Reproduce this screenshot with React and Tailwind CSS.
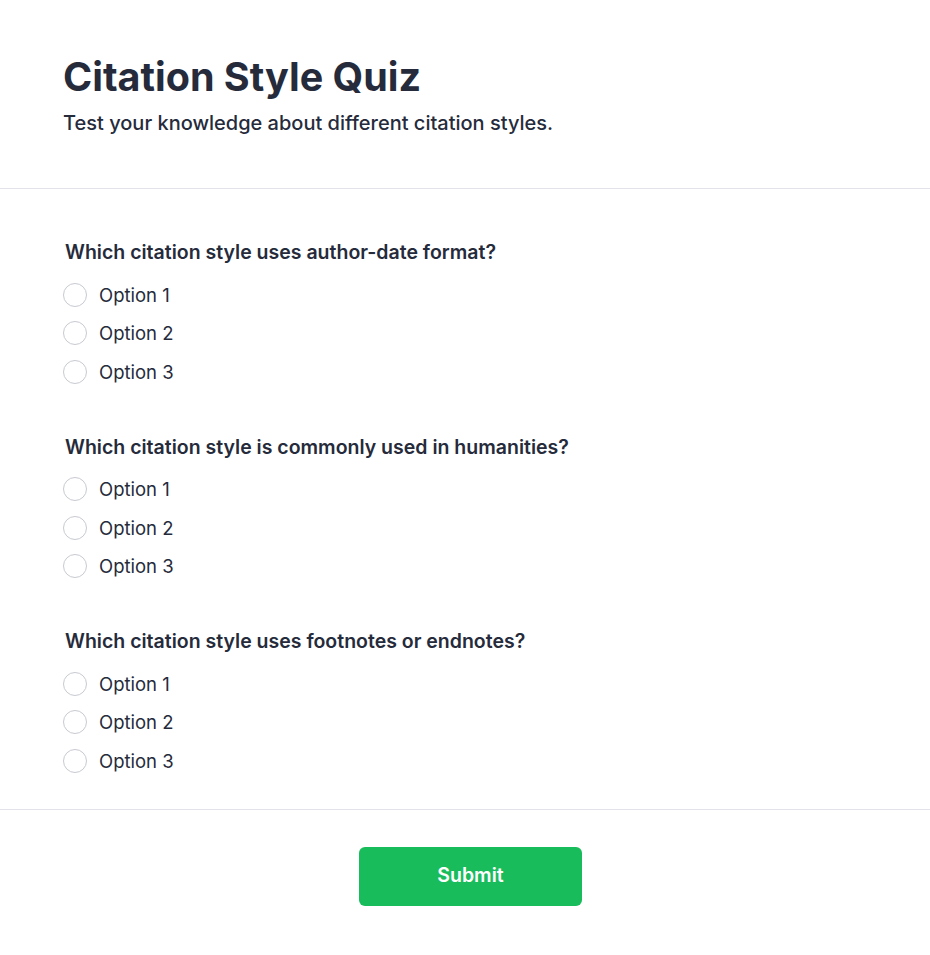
import React, { useState } from 'react';

const questions = [
  'Which citation style uses author-date format?',
  'Which citation style is commonly used in humanities?',
  'Which citation style uses footnotes or endnotes?',
];

export default function App() {
  const [answers, setAnswers] = useState({});

  return (
    <div className="min-h-screen bg-white text-[#262b3b]" style={{ fontFamily: 'Inter, "Liberation Sans", sans-serif' }}>
      <div className="px-[63px] pt-[51px] pb-[51px]">
        <h1 className="text-[39.5px] font-bold leading-[52px]">Citation Style Quiz</h1>
        <p className="text-[20px] font-medium mt-[6px] leading-7">Test your knowledge about different citation styles.</p>
      </div>

      <div className="border-t border-[#e2e3ea] px-[63px] pt-[49px] pb-[36px]">
        {questions.map((q, qi) => (
          <div key={qi} className="mb-[49px] last:mb-0">
            <h3 className="text-[19.5px] font-semibold ml-[2px] leading-7">{q}</h3>
            <div className="mt-[16.5px] flex flex-col gap-[14.5px]">
              {[1, 2, 3].map(n => (
                <label key={n} className="flex items-center gap-3 cursor-pointer">
                  <input
                    type="radio"
                    name={'q' + qi}
                    checked={answers[qi] === n}
                    onChange={() => setAnswers(a => ({ ...a, [qi]: n }))}
                    className="appearance-none w-6 h-6 rounded-full border border-[#c8cad2] bg-white checked:border-[7px] checked:border-[#19bc5b]"
                  />
                  <span className="text-[18.5px] leading-6">Option {n}</span>
                </label>
              ))}
            </div>
          </div>
        ))}
      </div>

      <div className="border-t border-[#e2e3ea] flex justify-center pt-[37px] pl-[11px]">
        <button className="w-[223px] h-[59px] rounded-md bg-[#19bc5b] text-white text-[19.5px] font-semibold">Submit</button>
      </div>
    </div>
  );
}
